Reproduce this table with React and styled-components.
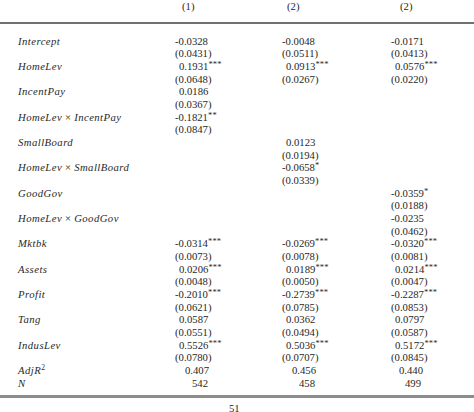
import React from 'react';
import styled, { createGlobalStyle } from 'styled-components';

const GlobalStyle = createGlobalStyle`
  html, body {
    margin: 0;
    padding: 0;
    background: #fff;
  }
  body {
    font-family: "Liberation Serif", "DejaVu Serif", serif;
    color: #282828;
  }
`;

const LINE = 12.67;
const COLS = '157px 107px 109px 1fr';

const rows = [
  ['Intercept', ['-0.0328', '(0.0431)'], ['-0.0048', '(0.0511)'], ['-0.0171', '(0.0413)']],
  ['HomeLev', ['0.1931***', '(0.0648)'], ['0.0913***', '(0.0267)'], ['0.0576***', '(0.0220)']],
  ['IncentPay', ['0.0186', '(0.0367)'], null, null],
  [['HomeLev', 'IncentPay'], ['-0.1821**', '(0.0847)'], null, null],
  ['SmallBoard', null, ['0.0123', '(0.0194)'], null],
  [['HomeLev', 'SmallBoard'], null, ['-0.0658*', '(0.0339)'], null],
  ['GoodGov', null, null, ['-0.0359*', '(0.0188)']],
  [['HomeLev', 'GoodGov'], null, null, ['-0.0235', '(0.0462)']],
  ['Mktbk', ['-0.0314***', '(0.0073)'], ['-0.0269***', '(0.0078)'], ['-0.0320***', '(0.0081)']],
  ['Assets', ['0.0206***', '(0.0048)'], ['0.0189***', '(0.0050)'], ['0.0214***', '(0.0047)']],
  ['Profit', ['-0.2010***', '(0.0621)'], ['-0.2739***', '(0.0785)'], ['-0.2287***', '(0.0853)']],
  ['Tang', ['0.0587', '(0.0551)'], ['0.0362', '(0.0494)'], ['0.0797', '(0.0587)']],
  ['IndusLev', ['0.5526***', '(0.0780)'], ['0.5036***', '(0.0707)'], ['0.5172***', '(0.0845)']],
];

const Page = styled.div`
  width: 474px;
  font-size: 10.7px;
`;

const Header = styled.div`
  display: grid;
  grid-template-columns: ${COLS};
  padding-left: 18px;
  height: 22px;
  line-height: 12px;
`;

const HeadCell = styled.div`
  padding-left: ${(p) => p.$pad}px;
`;

const Rule = styled.div`
  height: ${(p) => p.$h}px;
  background: ${(p) => p.$c};
`;

const Body = styled.div`
  padding: 10.7px 0 5.6px 18px;
  line-height: ${LINE}px;
`;

const Row = styled.div`
  display: grid;
  grid-template-columns: ${COLS};
`;

const Label = styled.div`
  font-style: italic;
  letter-spacing: 0.45px;
  white-space: nowrap;
`;

const Times = styled.span`
  font-style: normal;
  letter-spacing: 0;
  margin: 0 3px;
`;

const Cell = styled.div`
  display: flex;
  flex-direction: column;
  white-space: nowrap;
`;

const Value = styled.span`
  padding-left: ${(p) => (p.$pos ? 4 : 0)}px;
`;

const Stars = styled.sup`
  font-size: 8.5px;
  line-height: 0;
  vertical-align: 3px;
  letter-spacing: 0.2px;
`;

const StatCell = styled.div`
  padding-left: ${(p) => p.$pad}px;
`;

const Sup = styled.sup`
  font-style: normal;
  font-size: 7.5px;
  line-height: 0;
  vertical-align: 4px;
`;

const PageNo = styled.div`
  margin-top: 4px;
  padding-left: 229px;
  line-height: 12px;
`;

function Num({ text }) {
  const m = text.match(/^([^*]*)(\**)$/);
  const base = m[1];
  const stars = m[2];
  const pos = !base.startsWith('-') && !base.startsWith('(');
  return (
    <Value $pos={pos}>
      {base}
      {stars && <Stars>{stars}</Stars>}
    </Value>
  );
}

function VarLabel({ name }) {
  if (Array.isArray(name)) {
    return (
      <Label>
        {name[0]}
        <Times>×</Times>
        {name[1]}
      </Label>
    );
  }
  return <Label>{name}</Label>;
}

export default function App() {
  return (
    <Page>
      <GlobalStyle />
      <Header>
        <div />
        <HeadCell $pad={7}>(1)</HeadCell>
        <HeadCell $pad={5}>(2)</HeadCell>
        <HeadCell $pad={9}>(2)</HeadCell>
      </Header>
      <Rule $h={2} $c="#707070" />
      <Body>
        {rows.map(([name, ...cols], i) => (
          <Row key={i}>
            <VarLabel name={name} />
            {cols.map((c, j) => (
              <Cell key={j}>
                {c && (
                  <>
                    <Num text={c[0]} />
                    <Num text={c[1]} />
                  </>
                )}
              </Cell>
            ))}
          </Row>
        ))}
        <Row>
          <Label>
            AdjR<Sup>2</Sup>
          </Label>
          <StatCell $pad={10}>0.407</StatCell>
          <StatCell $pad={10}>0.456</StatCell>
          <StatCell $pad={8}>0.440</StatCell>
        </Row>
        <Row>
          <Label>N</Label>
          <StatCell $pad={17}>542</StatCell>
          <StatCell $pad={17}>458</StatCell>
          <StatCell $pad={14}>499</StatCell>
        </Row>
      </Body>
      <Rule $h={3} $c="#8c8c8c" />
      <PageNo>51</PageNo>
    </Page>
  );
}
